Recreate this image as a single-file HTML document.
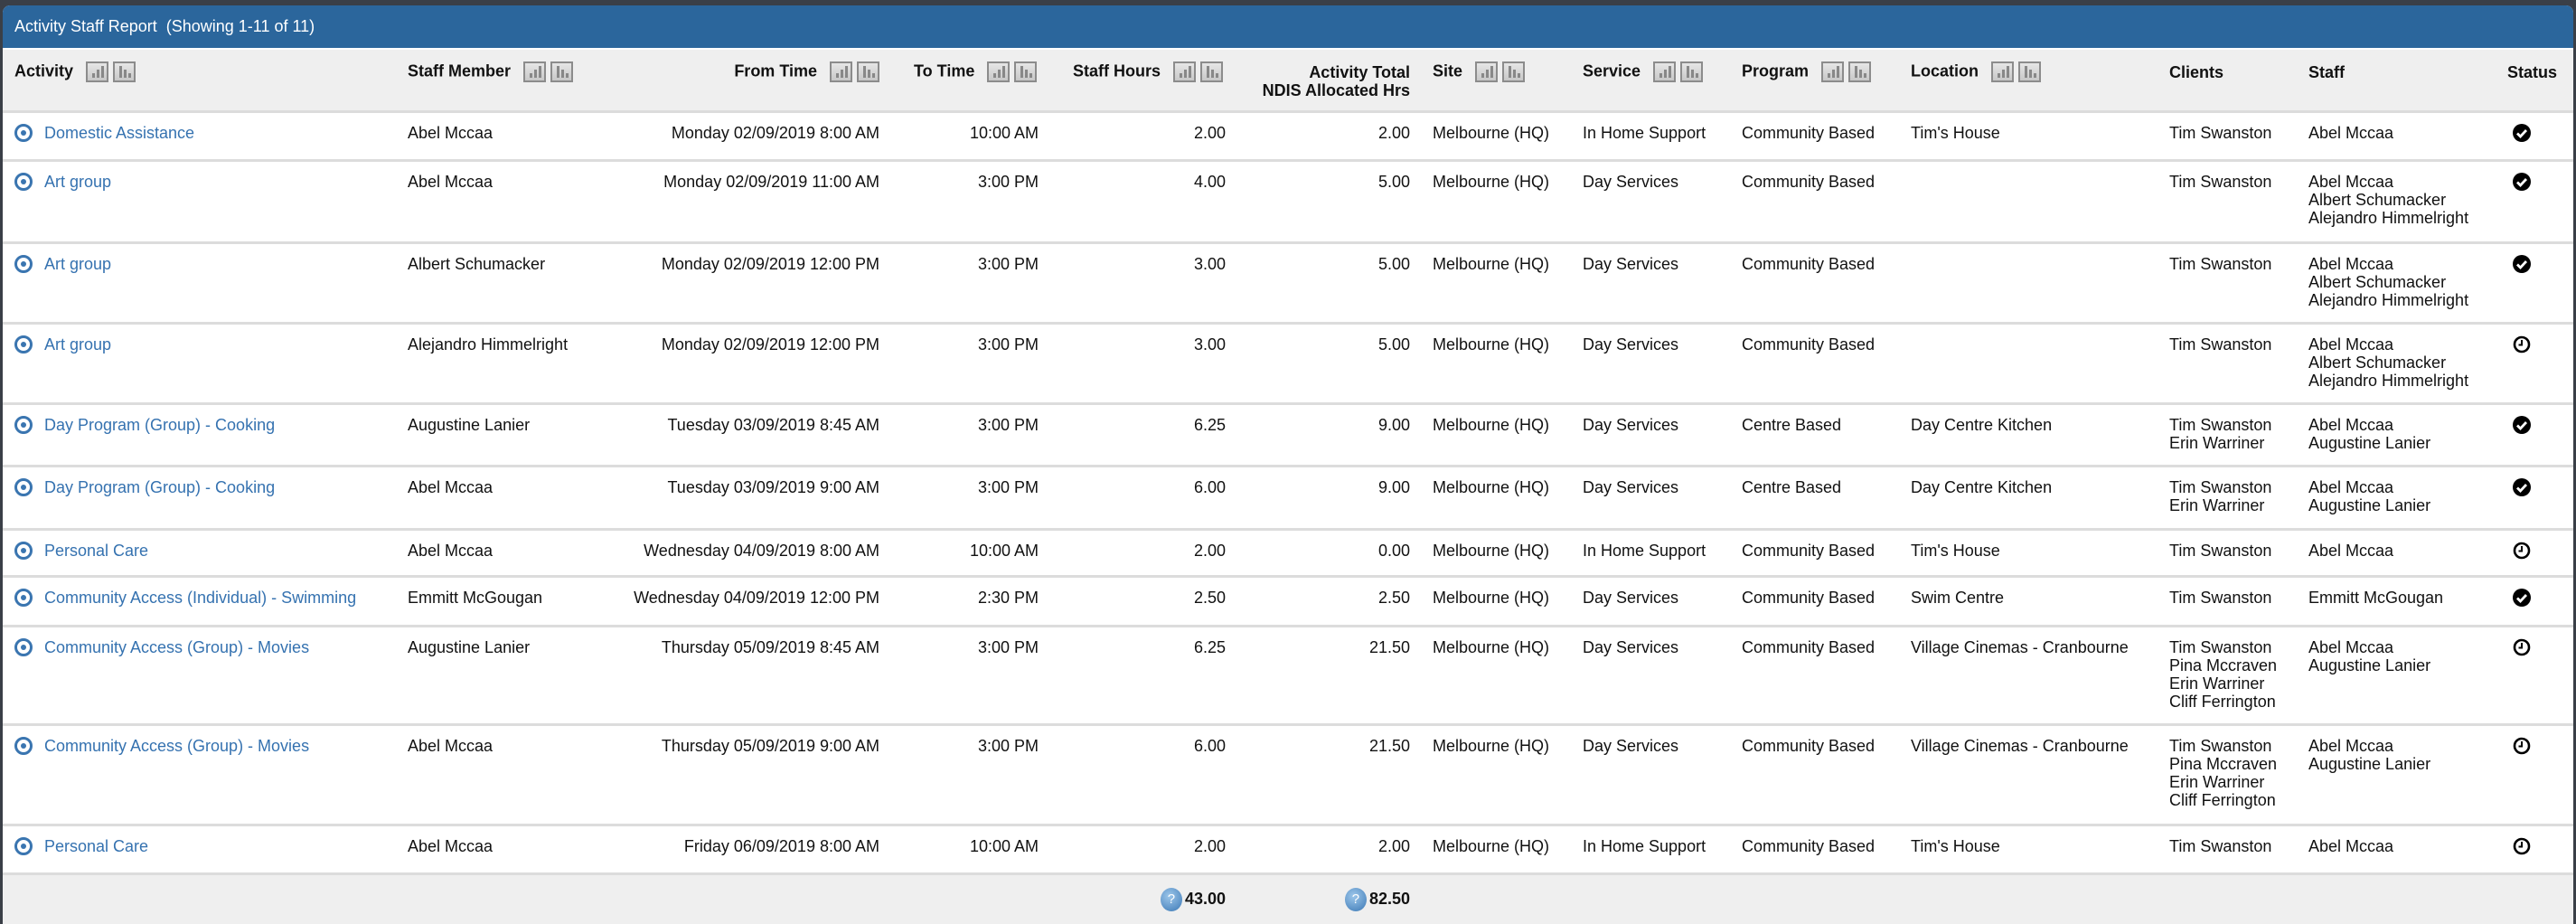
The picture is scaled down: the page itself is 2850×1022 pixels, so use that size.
<!DOCTYPE html>
<html><head><meta charset="utf-8"><style>
*{margin:0;padding:0;box-sizing:border-box}
body{width:2850px;height:1022px;background:#3a3f47;overflow:hidden;font-family:"Liberation Sans",Arial,sans-serif;font-size:18px;color:#111}
#p{position:absolute;left:3px;top:6px;width:2844px;height:1016px;background:#fff;border-radius:8px 8px 0 0;overflow:hidden}
#t{position:absolute;left:0;top:0;width:100%;height:47px;background:#2b669c;color:#fff;font-size:18px;line-height:47px;padding-left:13px}
#h{position:absolute;left:0;top:49px;width:100%;height:67px;background:#efefef;font-weight:bold}
.r{position:absolute;left:0;width:100%;border-top:3px solid #dcdcdc;line-height:20px}
.c{position:absolute;top:12px;white-space:nowrap}
.rt{text-align:right}
.s{display:inline-block;width:25px;height:23px;border:2px solid #8c8c8c;background:linear-gradient(#e6e6e6,#c8c8c8);vertical-align:middle;margin-left:5px;position:relative}
.s i{position:absolute;bottom:3px;width:3px;background:#888}
a{color:#3572b0;text-decoration:none}
.ic{position:absolute;left:13px;top:12px;width:20px;height:20px;border:3px solid #3a75b0;border-radius:50%}
.ic:after{content:"";position:absolute;left:4px;top:4px;width:6px;height:6px;border-radius:50%;background:#3a75b0}
.st{position:absolute;left:2777px;top:12px}
#f{position:absolute;left:0;top:959px;width:100%;height:60px;background:#efefef;border-top:3px solid #dcdcdc;font-weight:bold}
.q{display:inline-block;width:24px;height:26px;border-radius:50%;background:radial-gradient(circle at 40% 35%,#9cc6ea,#3b78b5);color:#fff;font-size:15px;text-align:center;line-height:26px;vertical-align:middle;margin-right:3px;font-weight:normal}
</style></head><body>
<div id="p">
<div id="t">Activity Staff Report&nbsp; (Showing 1-11 of 11)</div>
<div id="h">
<div class="c" style="left:13px;top:13px">Activity<span class="s" style="margin-left:14px"><i style="left:5px;height:5px"></i><i style="left:10px;height:9px"></i><i style="left:15px;height:13px"></i></span><span class="s"><i style="left:5px;height:13px"></i><i style="left:10px;height:9px"></i><i style="left:15px;height:5px"></i></span></div>
<div class="c" style="left:448px;top:13px">Staff Member<span class="s" style="margin-left:14px"><i style="left:5px;height:5px"></i><i style="left:10px;height:9px"></i><i style="left:15px;height:13px"></i></span><span class="s"><i style="left:5px;height:13px"></i><i style="left:10px;height:9px"></i><i style="left:15px;height:5px"></i></span></div>
<div class="c" style="right:1874px;top:13px">From Time<span class="s" style="margin-left:14px"><i style="left:5px;height:5px"></i><i style="left:10px;height:9px"></i><i style="left:15px;height:13px"></i></span><span class="s"><i style="left:5px;height:13px"></i><i style="left:10px;height:9px"></i><i style="left:15px;height:5px"></i></span></div>
<div class="c" style="left:1008px;top:13px">To Time<span class="s" style="margin-left:14px"><i style="left:5px;height:5px"></i><i style="left:10px;height:9px"></i><i style="left:15px;height:13px"></i></span><span class="s"><i style="left:5px;height:13px"></i><i style="left:10px;height:9px"></i><i style="left:15px;height:5px"></i></span></div>
<div class="c" style="left:1184px;top:13px">Staff Hours<span class="s" style="margin-left:14px"><i style="left:5px;height:5px"></i><i style="left:10px;height:9px"></i><i style="left:15px;height:13px"></i></span><span class="s"><i style="left:5px;height:13px"></i><i style="left:10px;height:9px"></i><i style="left:15px;height:5px"></i></span></div>
<div class="c rt" style="right:1287px;top:15px;line-height:20px">Activity Total<br>NDIS Allocated Hrs</div>
<div class="c" style="left:1582px;top:13px">Site<span class="s" style="margin-left:14px"><i style="left:5px;height:5px"></i><i style="left:10px;height:9px"></i><i style="left:15px;height:13px"></i></span><span class="s"><i style="left:5px;height:13px"></i><i style="left:10px;height:9px"></i><i style="left:15px;height:5px"></i></span></div>
<div class="c" style="left:1748px;top:13px">Service<span class="s" style="margin-left:14px"><i style="left:5px;height:5px"></i><i style="left:10px;height:9px"></i><i style="left:15px;height:13px"></i></span><span class="s"><i style="left:5px;height:13px"></i><i style="left:10px;height:9px"></i><i style="left:15px;height:5px"></i></span></div>
<div class="c" style="left:1924px;top:13px">Program<span class="s" style="margin-left:14px"><i style="left:5px;height:5px"></i><i style="left:10px;height:9px"></i><i style="left:15px;height:13px"></i></span><span class="s"><i style="left:5px;height:13px"></i><i style="left:10px;height:9px"></i><i style="left:15px;height:5px"></i></span></div>
<div class="c" style="left:2111px;top:13px">Location<span class="s" style="margin-left:14px"><i style="left:5px;height:5px"></i><i style="left:10px;height:9px"></i><i style="left:15px;height:13px"></i></span><span class="s"><i style="left:5px;height:13px"></i><i style="left:10px;height:9px"></i><i style="left:15px;height:5px"></i></span></div>
<div class="c" style="left:2397px;top:15px">Clients</div>
<div class="c" style="left:2551px;top:15px">Staff</div>
<div class="c" style="left:2771px;top:15px">Status</div>
</div>
<svg width="0" height="0" style="position:absolute"><defs>
<g id="ok"><circle cx="10" cy="10" r="10" fill="#000"/><path d="M5 10.5l3.5 3.5 6.5-7" stroke="#fff" stroke-width="2.8" fill="none"/></g>
<g id="ck"><circle cx="10" cy="10" r="8" fill="none" stroke="#000" stroke-width="2.6"/><path d="M10 5v5.5H6.5" stroke="#000" stroke-width="2" fill="none"/></g>
</defs></svg>
<div class="r" style="top:116px;height:54px"><span class="ic"></span><div class="c" style="left:46px"><a>Domestic Assistance</a></div><div class="c" style="left:448px">Abel Mccaa</div><div class="c rt" style="right:1874px">Monday 02/09/2019 8:00 AM</div><div class="c rt" style="right:1698px">10:00 AM</div><div class="c rt" style="right:1491px">2.00</div><div class="c rt" style="right:1287px">2.00</div><div class="c" style="left:1582px">Melbourne (HQ)</div><div class="c" style="left:1748px">In Home Support</div><div class="c" style="left:1924px">Community Based</div><div class="c" style="left:2111px">Tim's House</div><div class="c" style="left:2397px">Tim Swanston</div><div class="c" style="left:2551px">Abel Mccaa</div><svg class="st" width="20" height="20"><use href="#ok"/></svg></div>

<div class="r" style="top:170px;height:91px"><span class="ic"></span><div class="c" style="left:46px"><a>Art group</a></div><div class="c" style="left:448px">Abel Mccaa</div><div class="c rt" style="right:1874px">Monday 02/09/2019 11:00 AM</div><div class="c rt" style="right:1698px">3:00 PM</div><div class="c rt" style="right:1491px">4.00</div><div class="c rt" style="right:1287px">5.00</div><div class="c" style="left:1582px">Melbourne (HQ)</div><div class="c" style="left:1748px">Day Services</div><div class="c" style="left:1924px">Community Based</div><div class="c" style="left:2397px">Tim Swanston</div><div class="c" style="left:2551px">Abel Mccaa<br>Albert Schumacker<br>Alejandro Himmelright</div><svg class="st" width="20" height="20"><use href="#ok"/></svg></div>

<div class="r" style="top:261px;height:89px"><span class="ic"></span><div class="c" style="left:46px"><a>Art group</a></div><div class="c" style="left:448px">Albert Schumacker</div><div class="c rt" style="right:1874px">Monday 02/09/2019 12:00 PM</div><div class="c rt" style="right:1698px">3:00 PM</div><div class="c rt" style="right:1491px">3.00</div><div class="c rt" style="right:1287px">5.00</div><div class="c" style="left:1582px">Melbourne (HQ)</div><div class="c" style="left:1748px">Day Services</div><div class="c" style="left:1924px">Community Based</div><div class="c" style="left:2397px">Tim Swanston</div><div class="c" style="left:2551px">Abel Mccaa<br>Albert Schumacker<br>Alejandro Himmelright</div><svg class="st" width="20" height="20"><use href="#ok"/></svg></div>

<div class="r" style="top:350px;height:89px"><span class="ic"></span><div class="c" style="left:46px"><a>Art group</a></div><div class="c" style="left:448px">Alejandro Himmelright</div><div class="c rt" style="right:1874px">Monday 02/09/2019 12:00 PM</div><div class="c rt" style="right:1698px">3:00 PM</div><div class="c rt" style="right:1491px">3.00</div><div class="c rt" style="right:1287px">5.00</div><div class="c" style="left:1582px">Melbourne (HQ)</div><div class="c" style="left:1748px">Day Services</div><div class="c" style="left:1924px">Community Based</div><div class="c" style="left:2397px">Tim Swanston</div><div class="c" style="left:2551px">Abel Mccaa<br>Albert Schumacker<br>Alejandro Himmelright</div><svg class="st" width="20" height="20"><use href="#ck"/></svg></div>

<div class="r" style="top:439px;height:69px"><span class="ic"></span><div class="c" style="left:46px"><a>Day Program (Group) - Cooking</a></div><div class="c" style="left:448px">Augustine Lanier</div><div class="c rt" style="right:1874px">Tuesday 03/09/2019 8:45 AM</div><div class="c rt" style="right:1698px">3:00 PM</div><div class="c rt" style="right:1491px">6.25</div><div class="c rt" style="right:1287px">9.00</div><div class="c" style="left:1582px">Melbourne (HQ)</div><div class="c" style="left:1748px">Day Services</div><div class="c" style="left:1924px">Centre Based</div><div class="c" style="left:2111px">Day Centre Kitchen</div><div class="c" style="left:2397px">Tim Swanston<br>Erin Warriner</div><div class="c" style="left:2551px">Abel Mccaa<br>Augustine Lanier</div><svg class="st" width="20" height="20"><use href="#ok"/></svg></div>

<div class="r" style="top:508px;height:70px"><span class="ic"></span><div class="c" style="left:46px"><a>Day Program (Group) - Cooking</a></div><div class="c" style="left:448px">Abel Mccaa</div><div class="c rt" style="right:1874px">Tuesday 03/09/2019 9:00 AM</div><div class="c rt" style="right:1698px">3:00 PM</div><div class="c rt" style="right:1491px">6.00</div><div class="c rt" style="right:1287px">9.00</div><div class="c" style="left:1582px">Melbourne (HQ)</div><div class="c" style="left:1748px">Day Services</div><div class="c" style="left:1924px">Centre Based</div><div class="c" style="left:2111px">Day Centre Kitchen</div><div class="c" style="left:2397px">Tim Swanston<br>Erin Warriner</div><div class="c" style="left:2551px">Abel Mccaa<br>Augustine Lanier</div><svg class="st" width="20" height="20"><use href="#ok"/></svg></div>

<div class="r" style="top:578px;height:52px"><span class="ic"></span><div class="c" style="left:46px"><a>Personal Care</a></div><div class="c" style="left:448px">Abel Mccaa</div><div class="c rt" style="right:1874px">Wednesday 04/09/2019 8:00 AM</div><div class="c rt" style="right:1698px">10:00 AM</div><div class="c rt" style="right:1491px">2.00</div><div class="c rt" style="right:1287px">0.00</div><div class="c" style="left:1582px">Melbourne (HQ)</div><div class="c" style="left:1748px">In Home Support</div><div class="c" style="left:1924px">Community Based</div><div class="c" style="left:2111px">Tim's House</div><div class="c" style="left:2397px">Tim Swanston</div><div class="c" style="left:2551px">Abel Mccaa</div><svg class="st" width="20" height="20"><use href="#ck"/></svg></div>

<div class="r" style="top:630px;height:55px"><span class="ic"></span><div class="c" style="left:46px"><a>Community Access (Individual) - Swimming</a></div><div class="c" style="left:448px">Emmitt McGougan</div><div class="c rt" style="right:1874px">Wednesday 04/09/2019 12:00 PM</div><div class="c rt" style="right:1698px">2:30 PM</div><div class="c rt" style="right:1491px">2.50</div><div class="c rt" style="right:1287px">2.50</div><div class="c" style="left:1582px">Melbourne (HQ)</div><div class="c" style="left:1748px">Day Services</div><div class="c" style="left:1924px">Community Based</div><div class="c" style="left:2111px">Swim Centre</div><div class="c" style="left:2397px">Tim Swanston</div><div class="c" style="left:2551px">Emmitt McGougan</div><svg class="st" width="20" height="20"><use href="#ok"/></svg></div>

<div class="r" style="top:685px;height:109px"><span class="ic"></span><div class="c" style="left:46px"><a>Community Access (Group) - Movies</a></div><div class="c" style="left:448px">Augustine Lanier</div><div class="c rt" style="right:1874px">Thursday 05/09/2019 8:45 AM</div><div class="c rt" style="right:1698px">3:00 PM</div><div class="c rt" style="right:1491px">6.25</div><div class="c rt" style="right:1287px">21.50</div><div class="c" style="left:1582px">Melbourne (HQ)</div><div class="c" style="left:1748px">Day Services</div><div class="c" style="left:1924px">Community Based</div><div class="c" style="left:2111px">Village Cinemas - Cranbourne</div><div class="c" style="left:2397px">Tim Swanston<br>Pina Mccraven<br>Erin Warriner<br>Cliff Ferrington</div><div class="c" style="left:2551px">Abel Mccaa<br>Augustine Lanier</div><svg class="st" width="20" height="20"><use href="#ck"/></svg></div>

<div class="r" style="top:794px;height:111px"><span class="ic"></span><div class="c" style="left:46px"><a>Community Access (Group) - Movies</a></div><div class="c" style="left:448px">Abel Mccaa</div><div class="c rt" style="right:1874px">Thursday 05/09/2019 9:00 AM</div><div class="c rt" style="right:1698px">3:00 PM</div><div class="c rt" style="right:1491px">6.00</div><div class="c rt" style="right:1287px">21.50</div><div class="c" style="left:1582px">Melbourne (HQ)</div><div class="c" style="left:1748px">Day Services</div><div class="c" style="left:1924px">Community Based</div><div class="c" style="left:2111px">Village Cinemas - Cranbourne</div><div class="c" style="left:2397px">Tim Swanston<br>Pina Mccraven<br>Erin Warriner<br>Cliff Ferrington</div><div class="c" style="left:2551px">Abel Mccaa<br>Augustine Lanier</div><svg class="st" width="20" height="20"><use href="#ck"/></svg></div>

<div class="r" style="top:905px;height:54px"><span class="ic"></span><div class="c" style="left:46px"><a>Personal Care</a></div><div class="c" style="left:448px">Abel Mccaa</div><div class="c rt" style="right:1874px">Friday 06/09/2019 8:00 AM</div><div class="c rt" style="right:1698px">10:00 AM</div><div class="c rt" style="right:1491px">2.00</div><div class="c rt" style="right:1287px">2.00</div><div class="c" style="left:1582px">Melbourne (HQ)</div><div class="c" style="left:1748px">In Home Support</div><div class="c" style="left:1924px">Community Based</div><div class="c" style="left:2111px">Tim's House</div><div class="c" style="left:2397px">Tim Swanston</div><div class="c" style="left:2551px">Abel Mccaa</div><svg class="st" width="20" height="20"><use href="#ck"/></svg></div>

<div id="f"><div class="c rt" style="right:1491px;top:14px"><span class="q">?</span>43.00</div><div class="c rt" style="right:1287px;top:14px"><span class="q">?</span>82.50</div></div>
</div>
</body></html>
